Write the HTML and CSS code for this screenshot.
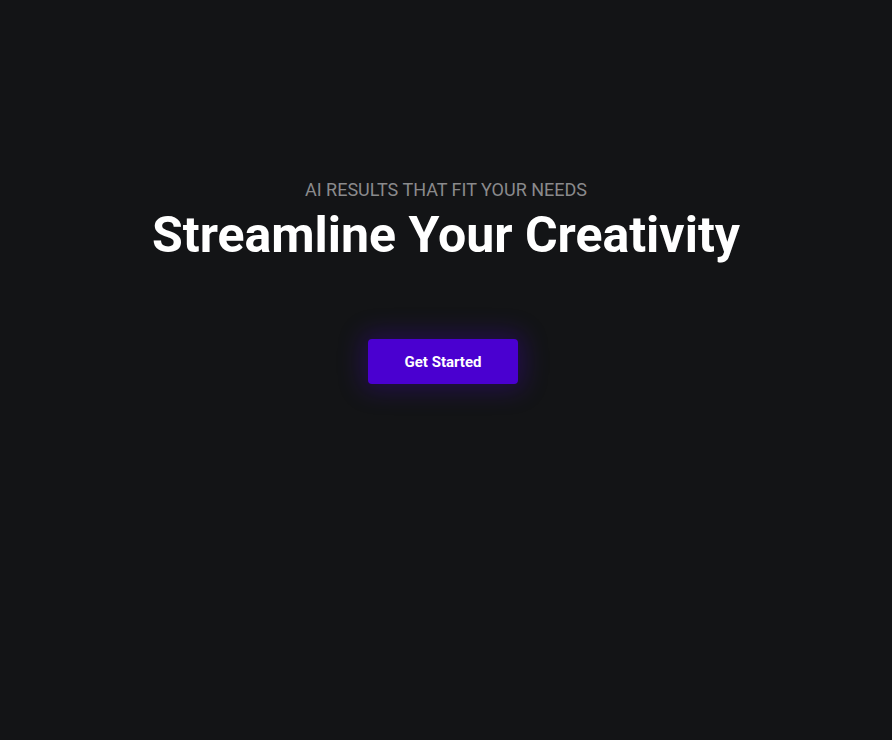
FILE: index.html
```html
<!DOCTYPE html>
<html>
<head>
<meta charset="utf-8">
<link rel="stylesheet" href="styles.css">
</head>
<body>
<main class="hero">
  <p class="eyebrow">AI RESULTS THAT FIT YOUR NEEDS</p>
  <h1 class="title">Streamline Your Creativity</h1>
  <a class="cta" href="#">Get Started</a>
</main>
</body>
</html>
```
FILE: styles.css
```css
html, body {
  margin: 0;
  padding: 0;
  background: #131416;
  height: 100%;
}
body {
  font-family: Roboto, "Liberation Sans", sans-serif;
  color: #fff;
}
.hero {
  display: flex;
  flex-direction: column;
  align-items: center;
  padding-top: 179px;
}
.eyebrow {
  margin: 0;
  font-size: 18px;
  line-height: 22px;
  color: #8a8a8c;
  font-weight: 400;
}
.title {
  margin: 5px 0 0;
  font-size: 50px;
  line-height: 58px;
  font-weight: 700;
  color: #fff;
}
.cta {
  margin: 75px 6px 0 0;
  display: flex;
  align-items: center;
  justify-content: center;
  width: 150px;
  height: 45px;
  background: #4a00d0;
  color: #fff;
  font-size: 15px;
  font-weight: 700;
  text-decoration: none;
  border-radius: 4px;
  box-shadow: 0 0 24px 6px rgba(74, 0, 208, 0.28);
}
```
